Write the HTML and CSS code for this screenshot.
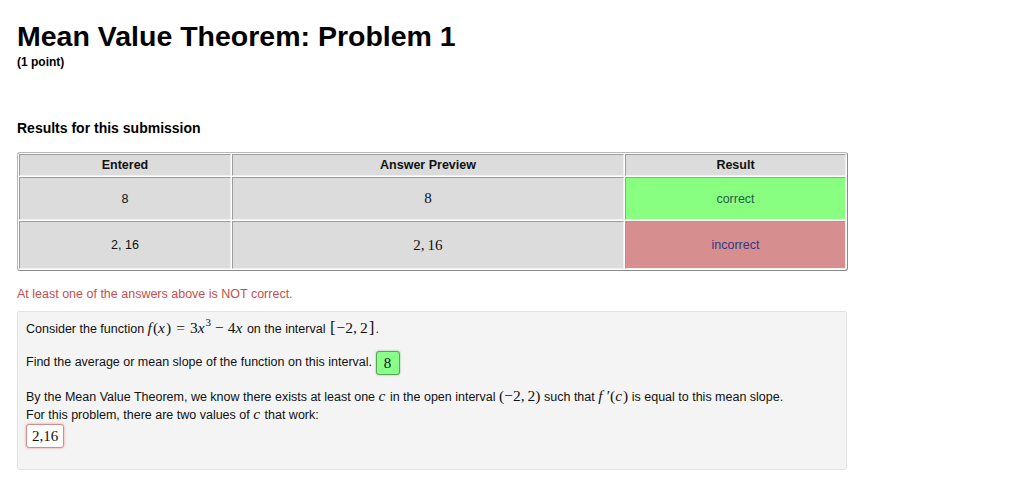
FILE: index.html
```html
<!DOCTYPE html>
<html>
<head>
<meta charset="utf-8">
<link rel="stylesheet" href="styles.css">
</head>
<body>
<div class="page">
  <h1 class="title">Mean Value Theorem: Problem 1</h1>
  <div class="points">(1 point)</div>

  <h2 class="results-title">Results for this submission</h2>

  <table class="attempt">
    <colgroup>
      <col class="c1"><col class="c2"><col class="c3">
    </colgroup>
    <tr class="head">
      <th>Entered</th><th>Answer Preview</th><th>Result</th>
    </tr>
    <tr class="r1">
      <td>8</td><td class="math">8</td><td class="ok">correct</td>
    </tr>
    <tr class="r2">
      <td>2, 16</td><td class="math">2,&thinsp;16</td><td class="bad">incorrect</td>
    </tr>
  </table>

  <p class="warn">At least one of the answers above is NOT correct.</p>

  <div class="problem">
    <p class="line">Consider the function <span class="m"><i>f</i>(<i>x</i>)<span class="rel">=</span>3<i>x</i><sup>3</sup><span class="op">−</span>4<i>x</i></span> on the interval <span class="m"><span class="br">[</span>−2,&thinsp;2<span class="br">]</span></span>.</p>
    <p class="line find">Find the average or mean slope of the function on this interval. <span class="ans ans-ok">8</span></p>
    <p class="line last">By the Mean Value Theorem, we know there exists at least one <span class="m"><i>c</i></span> in the open interval <span class="m">(−2,&thinsp;2)</span> such that <span class="m"><i>f</i>&thinsp;′(<i>c</i>)</span> is equal to this mean slope.<br>For this problem, there are two values of <span class="m"><i>c</i></span> that work:<br><span class="ans ans-bad">2,16</span></p>
  </div>
</div>
</body>
</html>
```

FILE: styles.css
```css
html, body {
  margin: 0;
  padding: 0;
  background: #ffffff;
}

body {
  font-family: "Liberation Sans", Arial, Helvetica, sans-serif;
  color: #111;
  font-size: 12.5px;
}

.page {
  padding: 0 177px 0 17px;
}

.title {
  margin: 0;
  padding-top: 20px;
  font-size: 28.5px;
  line-height: 33px;
  font-weight: bold;
  color: #000;
}

.points {
  margin-top: 2px;
  font-size: 12px;
  font-weight: bold;
  line-height: 14px;
  color: #000;
}

.results-title {
  margin: 50px 0 0 0;
  font-size: 14px;
  line-height: 18px;
  font-weight: bold;
  color: #000;
}

.attempt {
  margin-top: 15px;
  width: 829px;
  border-collapse: separate;
  border-spacing: 1px;
  border: 1px solid #b8b8b8;
  border-right-color: #8a8a8a;
  border-bottom-color: #8a8a8a;
  border-radius: 3px;
  table-layout: fixed;
}

.c1 { width: 212px; }
.c2 { width: 392px; }
.c3 { width: 221px; }

.attempt th,
.attempt td {
  background: #dcdcdc;
  text-align: center;
  border: 1px solid;
  border-color: #9c9c9c #f0f0f0 #f0f0f0 #9c9c9c;
  padding: 0 5px;
  font-size: 12.5px;
}

.attempt th {
  height: 20px;
  font-weight: bold;
  color: #111;
}

.r1 td { height: 41px; }
.r2 td { height: 46px; }

.attempt td.math {
  font-family: "Liberation Serif", "Times New Roman", serif;
  font-size: 15px;
}

.attempt td.ok {
  background: #88ff80;
  color: #23604a;
}

.attempt td.bad {
  background: #d68f8e;
  color: #35358a;
}

.warn {
  margin: 15px 0 0 0;
  color: #c4504c;
  line-height: 16px;
}

.problem {
  margin-top: 9px;
  background: #f4f4f4;
  border: 1px solid #e3e3e3;
  border-radius: 2px;
  padding: 7px 8px 21px 8px;
}

.line {
  margin: 0;
  line-height: 18px;
  color: #111;
}

.find {
  margin-top: 11px;
  line-height: 26px;
}

.last {
  margin-top: 13px;
}

.m {
  font-family: "Liberation Serif", "Times New Roman", serif;
  font-size: 15.5px;
  line-height: 1;
  white-space: nowrap;
}

.m i {
  padding-right: 1px;
}

.m .rel {
  margin: 0 5px;
}

.m .op {
  margin: 0 4px;
}

.m sup {
  font-size: 11px;
  line-height: 0;
  vertical-align: 7px;
}

.m .br {
  font-size: 17px;
  margin: 0 1px;
}

.ans {
  display: inline-block;
  box-sizing: border-box;
  height: 24px;
  line-height: 22px;
  padding: 0 6px;
  border-radius: 3px;
  font-family: "Liberation Serif", "Times New Roman", serif;
  font-size: 15px;
  text-align: center;
}

.ans-ok {
  background: #88ff88;
  border: 1px solid #5aa55a;
  box-shadow: 0 0 2px rgba(60, 140, 60, 0.6);
  width: 24px;
  padding: 0;
  vertical-align: middle;
}

.ans-bad {
  background: #ffffff;
  border: 1px solid #d48b8b;
  box-shadow: 0 0 3px rgba(210, 100, 100, 0.55);
  width: 38px;
  padding: 0;
  vertical-align: top;
}
```
